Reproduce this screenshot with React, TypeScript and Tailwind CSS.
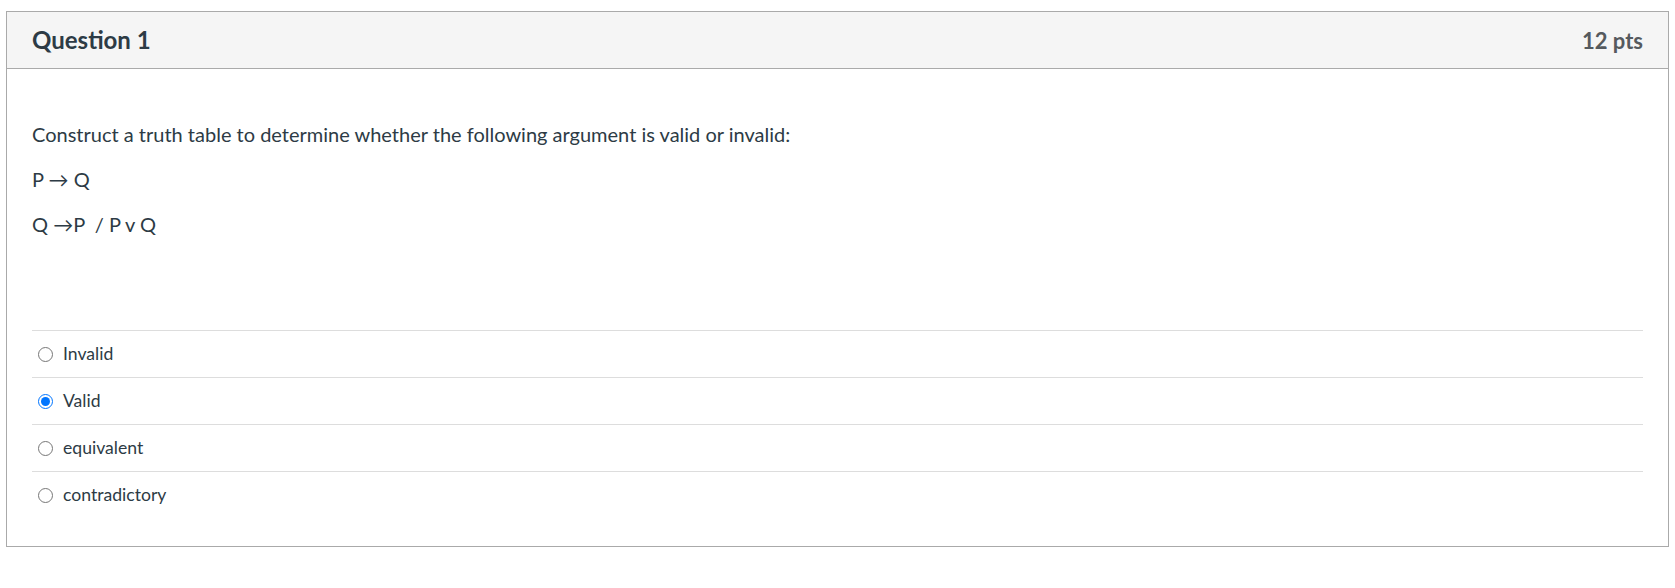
import React from "react";

const answers = [
  { label: "Invalid", checked: false },
  { label: "Valid", checked: true },
  { label: "equivalent", checked: false },
  { label: "contradictory", checked: false },
];

export default function App() {
  return (
    <div
      className="w-[1675px] h-[588px] bg-white pt-[11px] pl-[6px]"
      style={{ fontFamily: "Lato, 'Liberation Sans', sans-serif" }}
    >
      <div className="w-[1663px] h-[536px] border border-[#aaaaaa] flex flex-col">
        <div className="h-[57px] bg-[#f5f5f5] border-b border-[#aaaaaa] flex items-center justify-between px-[25px] shrink-0">
          <div className="text-[24px] font-bold text-[#2d3b45]">Question 1</div>
          <div className="text-[22px] font-bold text-[#555a5e]">12 pts</div>
        </div>
        <div className="px-[25px] pt-[50px]">
          <p className="text-[20px] leading-[30px] text-[#2d3b45] mb-[15px]">
            Construct a truth table to determine whether the following argument is valid or invalid:
          </p>
          <p className="text-[20px] leading-[30px] text-[#2d3b45] mb-[15px]">P → Q</p>
          <p className="text-[20px] leading-[30px] text-[#2d3b45]">Q →P&nbsp; / P v Q</p>
          <div className="mt-[91px]">
            {answers.map((a) => (
              <label
                key={a.label}
                className="flex items-center h-[47px] border-t border-[#dddddd] pl-[6px]"
              >
                <input
                  type="radio"
                  name="q1"
                  defaultChecked={a.checked}
                  className="w-[15px] h-[15px] m-0"
                />
                <span className="ml-[10px] text-[17.6px] text-[#2d3b45]">{a.label}</span>
              </label>
            ))}
          </div>
        </div>
      </div>
    </div>
  );
}
